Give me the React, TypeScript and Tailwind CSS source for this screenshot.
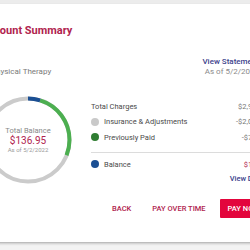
import React from "react";

const R = 41.5;
const C = 2 * Math.PI * R;

const balanceShare = 136.95 / 2912.4;
const paidShare = 765.3 / 2912.4;

const rows = [
  { label: "Insurance & Adjustments", value: "-$2,010.15", dot: "bg-[#c9c9c9]" },
  { label: "Previously Paid", value: "-$765.30", dot: "bg-[#2f7d32]" },
];

function BalanceRing() {
  return (
    <div className="relative w-[90px] h-[90px] shrink-0">
      <svg width="90" height="90" viewBox="0 0 90 90" className="-rotate-90">
        <circle cx="45" cy="45" r={R} fill="none" stroke="#cbcbcb" strokeWidth="4" />
        <circle
          cx="45"
          cy="45"
          r={R}
          fill="none"
          stroke="#4caf50"
          strokeWidth="4"
          strokeDasharray={`${paidShare * C} ${C}`}
          strokeDashoffset={-balanceShare * C}
        />
        <circle
          cx="45"
          cy="45"
          r={R}
          fill="none"
          stroke="#1b4f93"
          strokeWidth="4"
          strokeDasharray={`${balanceShare * C} ${C}`}
        />
      </svg>
      <div className="absolute inset-0 flex flex-col items-center justify-center">
        <span className="text-[7.5px] leading-[8px] text-[#8a8a8a]">Total Balance</span>
        <span className="text-[10px] leading-[11px] text-[#b0234e]">$136.95</span>
        <span className="text-[6px] leading-[7px] text-[#9a9a9a]">As of 5/2/2022</span>
      </div>
    </div>
  );
}

export default function App() {
  return (
    <div className="w-[250px] h-[250px] overflow-hidden bg-[#f3f3f3] font-['Roboto',sans-serif]">
      <div className="h-[4px] bg-[#ececec]" />
      <div className="h-[239px] w-[330px] -ml-[35px] pl-[16px] bg-white border-b border-[#bdbdbd] shadow-[0_1px_2px_rgba(0,0,0,0.18)]">
        <h2 className="pt-[20px] text-[11px] leading-[14px] font-bold text-[#b0234e]">Account Summary</h2>

        <div className="mt-[19px] flex items-end w-[278px]">
          <span className="ml-[10px] text-[8px] leading-[10px] text-[#7a7a7a]">Physical Therapy</span>
          <div className="ml-auto flex flex-col items-end">
            <span className="text-[8px] leading-[10px] font-medium text-[#3c3f8c]">View Statement</span>
            <span className="text-[8px] leading-[10px] text-[#8a8a8a]">As of 5/2/2022</span>
          </div>
        </div>

        <div className="mt-[18px] flex ml-[2px]">
          <BalanceRing />
          <div className="ml-[18px] w-[180px] pt-[3.5px] text-[7.5px] text-[#4a4a4a]">
            <div className="h-[15.5px] flex items-center justify-between">
              <span>Total Charges</span>
              <span className="text-[#777]">$2,912.40</span>
            </div>
            {rows.map((r) => (
              <div key={r.label} className="h-[15.5px] flex items-center justify-between">
                <span className="flex items-center gap-[5px]">
                  <span className={`w-[8px] h-[8px] rounded-full ${r.dot}`} />
                  {r.label}
                </span>
                <span className="text-[#777]">{r.value}</span>
              </div>
            ))}
            <div className="mt-[7px] border-t border-[#dcdcdc]" />
            <div className="mt-[3.5px] h-[15.5px] flex items-center justify-between">
              <span className="flex items-center gap-[5px]">
                <span className="w-[8px] h-[8px] rounded-full bg-[#1b4f93]" />
                Balance
              </span>
              <span className="text-[#b0234e]">$136.95</span>
            </div>
            <div className="mt-[1.5px] flex justify-end">
              <span className="leading-[9px] font-medium text-[#3c3f8c]">View Details</span>
            </div>
          </div>
        </div>

        <div className="mt-[14px] ml-[124px] flex items-center gap-[7px] text-[7.5px] font-medium">
          <button className="h-[19px] px-[7px] text-[#b0234e]">BACK</button>
          <button className="h-[19px] px-[7px] text-[#b0234e]">PAY OVER TIME</button>
          <button className="h-[19px] px-[8px] bg-[#e3053c] text-white rounded-[1px]">PAY NOW</button>
        </div>
      </div>
    </div>
  );
}
